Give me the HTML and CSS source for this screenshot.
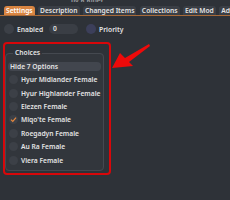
FILE: index.html
```html
<!DOCTYPE html>
<html lang="en">
<head>
  <meta charset="UTF-8">
  <meta name="viewport" content="width=device-width, initial-scale=1.0">
  <title>Mod Settings</title>
  <link rel="stylesheet" href="styles.css">
</head>
<body>
  <div class="byline">by R Rider</div>

  <!-- Tabs -->
  <div class="tab-bar">
    <span class="tab active">Settings</span>
    <span class="tab">Description</span>
    <span class="tab">Changed Items</span>
    <span class="tab">Collections</span>
    <span class="tab">Edit Mod</span>
    <span class="tab">Advanced</span>
  </div>

  <!-- Enabled / Priority -->
  <div class="top-row">
    <span class="radio"></span>
    <span class="label">Enabled</span>
    <span class="num-input">0</span>
    <span class="radio priority"></span>
    <span class="label">Priority</span>
  </div>

  <!-- Choices group -->
  <div class="choices-wrap">
    <fieldset class="choices">
      <legend>Choices</legend>
      <div class="hide-btn">Hide 7 Options</div>
      <div class="option"><span class="radio"></span>Hyur Midlander Female</div>
      <div class="option"><span class="radio"></span>Hyur Highlander Female</div>
      <div class="option"><span class="radio"></span>Elezen Female</div>
      <div class="option"><span class="radio checked"><svg viewBox="0 0 10 10"><path d="M2.2 5.2 L4.2 7.2 L7.8 2.8" /></svg></span>Miqo'te Female</div>
      <div class="option"><span class="radio"></span>Roegadyn Female</div>
      <div class="option"><span class="radio"></span>Au Ra Female</div>
      <div class="option"><span class="radio"></span>Viera Female</div>
    </fieldset>
    <div class="highlight"></div>
  </div>

  <!-- Annotation arrow -->
  <svg class="arrow" width="230" height="200" viewBox="0 0 230 200">
    <polygon points="112,68 120,53 125,58 149,44 150,46 129,62 133,66" />
  </svg>
</body>
</html>
```

FILE: styles.css
```css
* {
  margin: 0;
  padding: 0;
  box-sizing: border-box;
}

body {
  width: 230px;
  height: 200px;
  overflow: hidden;
  background-color: #2e3238;
  font-family: "Noto Sans", sans-serif;
  font-weight: 600;
  font-size: 6.7px;
  color: #e4e4e4;
  white-space: nowrap;
  position: relative;
}

.byline {
  height: 4px;
  line-height: 6px;
  margin-top: -2px;
  padding-left: 71px;
  color: #a2a4a8;
  overflow: hidden;
}

.tab-bar {
  display: flex;
  gap: 3.4px;
  margin-top: 4px;
  padding-left: 4px;
  border-bottom: 1px solid #a86a38;
  overflow: hidden;
}

.tab {
  height: 9px;
  line-height: 9px;
  padding: 0 2px;
  background-color: #3b3f46;
  border-radius: 3px 3px 0 0;
  flex-shrink: 0;
}

.tab.active {
  background-color: #d98542;
  color: #fff;
}

.top-row {
  display: flex;
  align-items: center;
  height: 10px;
  margin-top: 8px;
  padding-left: 4px;
}

.radio {
  width: 10px;
  height: 10px;
  border-radius: 50%;
  background-color: #3c4047;
  flex-shrink: 0;
}

.top-row .label {
  margin-left: 3px;
}

.num-input {
  width: 29px;
  height: 10px;
  line-height: 10px;
  margin-left: 6px;
  padding-left: 4px;
  background-color: #3a3e45;
  border-radius: 5px;
}

.radio.priority {
  margin-left: 8px;
  background-color: #3c3f5a;
}

.choices-wrap {
  position: relative;
  margin: 8px 0 0 3px;
  width: 108px;
  height: 133px;
  padding: 7px 11px 2px 2px;
}

.choices {
  height: 122px;
  border: 1px solid #454950;
  border-radius: 4px;
  background-color: #32363c;
  padding: 0 2px;
}

.choices legend {
  margin-left: 5px;
  padding: 0 2px;
  line-height: 8px;
}

.hide-btn {
  height: 9px;
  line-height: 9px;
  margin: 5px 0 2px;
  padding-left: 2px;
  background-color: #42464e;
  border-radius: 4px;
}

.option {
  display: flex;
  align-items: center;
  gap: 3px;
  height: 13.4px;
  padding-left: 1px;
}

.option .radio {
  width: 9px;
  height: 9px;
}

.radio svg {
  width: 9px;
  height: 9px;
  display: block;
}

.radio svg path {
  fill: none;
  stroke: #e8873c;
  stroke-width: 1.3;
}

.highlight {
  position: absolute;
  inset: 0;
  border: 2px solid #d8070a;
  border-radius: 4px;
}

.arrow {
  position: absolute;
  left: 0;
  top: 0;
}

.arrow polygon {
  fill: #ee0a0a;
}
```
